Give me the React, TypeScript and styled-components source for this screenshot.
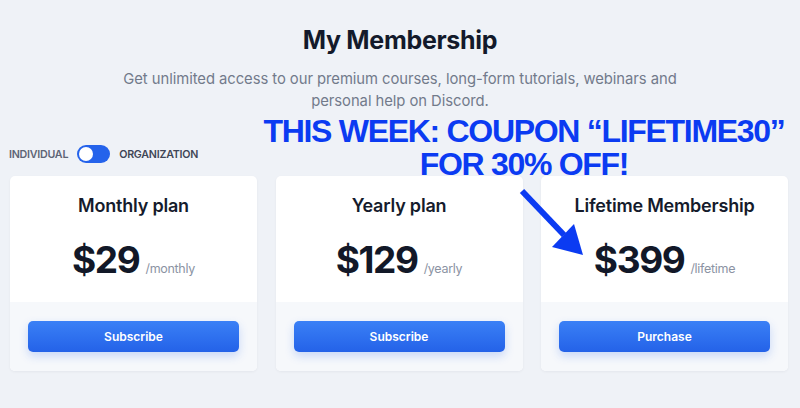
import React, { useState } from 'react';
import styled, { createGlobalStyle } from 'styled-components';

const GlobalStyle = createGlobalStyle`
  html, body {
    margin: 0;
    padding: 0;
    background: #eff2f7;
  }
  body {
    font-family: Inter, "Noto Sans", sans-serif;
    -webkit-font-smoothing: antialiased;
  }
`;

interface Plan {
    title: string;
    price: string;
    period: string;
    action: string;
}

const plans: Plan[] = [
    { title: 'Monthly plan', price: '$29', period: '/monthly', action: 'Subscribe' },
    { title: 'Yearly plan', price: '$129', period: '/yearly', action: 'Subscribe' },
    { title: 'Lifetime Membership', price: '$399', period: '/lifetime', action: 'Purchase' },
];

const Page = styled.div`
  position: relative;
  width: 800px;
  height: 408px;
  overflow: hidden;
  padding-top: 25px;
  box-sizing: border-box;
`;

const Header = styled.header`
  display: flex;
  flex-direction: column;
  align-items: center;
`;

const Title = styled.h1`
  margin: 0;
  font-size: 25px;
  line-height: 30px;
  font-weight: 700;
  color: #131a2b;
  letter-spacing: -0.3px;
`;

const Subtitle = styled.p`
  margin: 13px 0 0;
  font-size: 14.8px;
  line-height: 22px;
  font-weight: 400;
  color: #727a8b;
  letter-spacing: -0.05px;
  text-align: center;
`;

const ToggleRow = styled.div`
  display: flex;
  align-items: center;
  gap: 9px;
  height: 18px;
  margin: 33px 0 0 9px;
`;

const ToggleLabel = styled.span<{ $active?: boolean }>`
  font-size: 10.7px;
  font-weight: 600;
  letter-spacing: -0.25px;
  color: ${p => (p.$active ? '#3f4656' : '#5d6475')};
`;

const Track = styled.button`
  position: relative;
  width: 33px;
  height: 18px;
  padding: 0;
  border: none;
  border-radius: 9px;
  background: #2563eb;
  cursor: pointer;
`;

const Knob = styled.span<{ $on: boolean }>`
  position: absolute;
  top: 2px;
  left: ${p => (p.$on ? '17px' : '2px')};
  width: 14px;
  height: 14px;
  border-radius: 50%;
  background: #ffffff;
  transition: left 0.15s;
`;

const Cards = styled.div`
  display: grid;
  grid-template-columns: repeat(3, 1fr);
  gap: 18.5px;
  margin: 13px 12px 0 10px;
`;

const Card = styled.div`
  display: flex;
  flex-direction: column;
  background: #ffffff;
  border-radius: 5px;
  overflow: hidden;
  box-shadow: 0 1px 3px rgba(15, 23, 42, 0.05);
`;

const CardTop = styled.div`
  display: flex;
  flex-direction: column;
  align-items: center;
  padding: 18px 0 19px;
`;

const PlanTitle = styled.h3`
  margin: 0;
  font-size: 18px;
  line-height: 24px;
  font-weight: 600;
  color: #151b2c;
  letter-spacing: -0.2px;
`;

const PriceRow = styled.div`
  display: flex;
  align-items: baseline;
  gap: 6px;
  margin-top: 19px;
  height: 46px;
`;

const Price = styled.span`
  font-size: 37px;
  line-height: 46px;
  font-weight: 700;
  color: #121828;
  letter-spacing: -1.4px;
`;

const Period = styled.span`
  font-size: 12.5px;
  color: #8b93a3;
  letter-spacing: -0.3px;
`;

const CardFooter = styled.div`
  background: #f6f8fb;
  padding: 19px 18px;
`;

const ActionButton = styled.button`
  display: block;
  width: 100%;
  height: 31px;
  border: none;
  border-radius: 5px;
  background: linear-gradient(180deg, #3a80f6 0%, #2462e8 100%);
  box-shadow: 0 4px 10px rgba(37, 99, 235, 0.22);
  color: #ffffff;
  font-family: Inter, "Noto Sans", sans-serif;
  font-size: 12px;
  font-weight: 600;
  cursor: pointer;
`;

const Promo = styled.div`
  position: absolute;
  top: 115px;
  left: 224px;
  width: 600px;
  text-align: center;
  font-family: "Liberation Sans", Arial, sans-serif;
  font-size: 32px;
  line-height: 33px;
  font-weight: 700;
  letter-spacing: -1.3px;
  color: #0b3bf2;
  z-index: 2;
`;

const Arrow = styled.svg`
  position: absolute;
  top: 180px;
  left: 510px;
  z-index: 2;
`;

export default function App() {
    const [organization, setOrganization] = useState(true);

    return (
        <>
            <GlobalStyle />
            <Page>
                <Header>
                    <Title>My Membership</Title>
                    <Subtitle>
                        Get unlimited access to our premium courses, long-form tutorials, webinars and
                        <br />
                        personal help on Discord.
                    </Subtitle>
                </Header>

                <ToggleRow>
                    <ToggleLabel $active={!organization}>INDIVIDUAL</ToggleLabel>
                    <Track onClick={() => setOrganization(!organization)}>
                        <Knob $on={!organization} />
                    </Track>
                    <ToggleLabel $active={organization}>ORGANIZATION</ToggleLabel>
                </ToggleRow>

                <Cards>
                    {plans.map(plan => (
                        <Card key={plan.title}>
                            <CardTop>
                                <PlanTitle>{plan.title}</PlanTitle>
                                <PriceRow>
                                    <Price>{plan.price}</Price>
                                    <Period>{plan.period}</Period>
                                </PriceRow>
                            </CardTop>
                            <CardFooter>
                                <ActionButton>{plan.action}</ActionButton>
                            </CardFooter>
                        </Card>
                    ))}
                </Cards>

                <Promo>
                    THIS WEEK: COUPON “LIFETIME30”
                    <br />
                    FOR 30% OFF!
                </Promo>
                {/* arrow pointing at the lifetime price */}
                <Arrow width="90" height="85" viewBox="0 0 90 85">
                    <line x1="12" y1="11" x2="54" y2="55" stroke="#0b3bf2" strokeWidth="6" />
                    <polygon points="73,75 42,67 64,44" fill="#0b3bf2" />
                </Arrow>
            </Page>
        </>
    );
}
